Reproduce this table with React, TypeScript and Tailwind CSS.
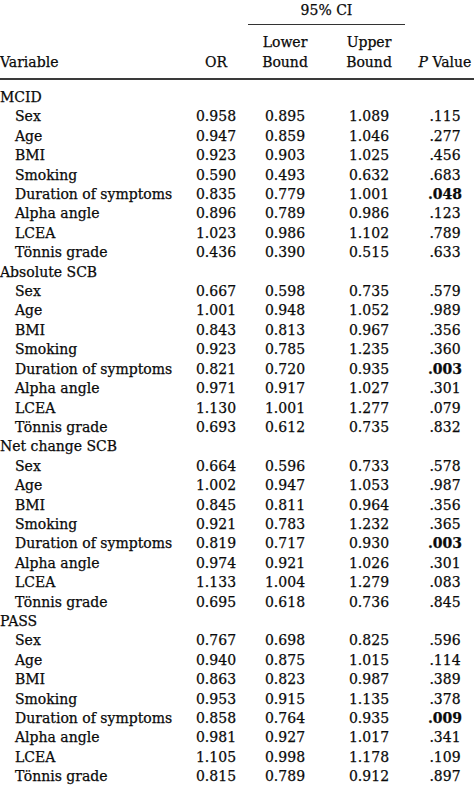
const groups: { name: string; rows: [string, string, string, string, string, boolean?][] }[] = [
  {
    name: "MCID",
    rows: [
      ["Sex", "0.958", "0.895", "1.089", ".115"],
      ["Age", "0.947", "0.859", "1.046", ".277"],
      ["BMI", "0.923", "0.903", "1.025", ".456"],
      ["Smoking", "0.590", "0.493", "0.632", ".683"],
      ["Duration of symptoms", "0.835", "0.779", "1.001", ".048", true],
      ["Alpha angle", "0.896", "0.789", "0.986", ".123"],
      ["LCEA", "1.023", "0.986", "1.102", ".789"],
      ["Tönnis grade", "0.436", "0.390", "0.515", ".633"],
    ],
  },
  {
    name: "Absolute SCB",
    rows: [
      ["Sex", "0.667", "0.598", "0.735", ".579"],
      ["Age", "1.001", "0.948", "1.052", ".989"],
      ["BMI", "0.843", "0.813", "0.967", ".356"],
      ["Smoking", "0.923", "0.785", "1.235", ".360"],
      ["Duration of symptoms", "0.821", "0.720", "0.935", ".003", true],
      ["Alpha angle", "0.971", "0.917", "1.027", ".301"],
      ["LCEA", "1.130", "1.001", "1.277", ".079"],
      ["Tönnis grade", "0.693", "0.612", "0.735", ".832"],
    ],
  },
  {
    name: "Net change SCB",
    rows: [
      ["Sex", "0.664", "0.596", "0.733", ".578"],
      ["Age", "1.002", "0.947", "1.053", ".987"],
      ["BMI", "0.845", "0.811", "0.964", ".356"],
      ["Smoking", "0.921", "0.783", "1.232", ".365"],
      ["Duration of symptoms", "0.819", "0.717", "0.930", ".003", true],
      ["Alpha angle", "0.974", "0.921", "1.026", ".301"],
      ["LCEA", "1.133", "1.004", "1.279", ".083"],
      ["Tönnis grade", "0.695", "0.618", "0.736", ".845"],
    ],
  },
  {
    name: "PASS",
    rows: [
      ["Sex", "0.767", "0.698", "0.825", ".596"],
      ["Age", "0.940", "0.875", "1.015", ".114"],
      ["BMI", "0.863", "0.823", "0.987", ".389"],
      ["Smoking", "0.953", "0.915", "1.135", ".378"],
      ["Duration of symptoms", "0.858", "0.764", "0.935", ".009", true],
      ["Alpha angle", "0.981", "0.927", "1.017", ".341"],
      ["LCEA", "1.105", "0.998", "1.178", ".109"],
      ["Tönnis grade", "0.815", "0.789", "0.912", ".897"],
    ],
  },
];

const cols = "grid grid-cols-[184px_64px_74px_94px_58px]";

export default function App() {
  return (
    <div
      className="w-[474px] h-[786px] overflow-hidden bg-white text-[#0a0a0a] text-[14px] leading-[19.4px] [-webkit-text-stroke:0.25px_#0a0a0a]"
      style={{ fontFamily: '"DejaVu Serif", serif' }}
    >
      {/* header */}
      <div className={cols}>
        <div className="col-start-3 col-span-2 mr-[11px] h-[25px] border-b-[1.5px] border-[#333] text-center leading-[20px]">
          95% CI
        </div>
      </div>
      <div className={`${cols} items-end h-[55px] pb-[6px] border-b-2 border-[#3a3a3a]`}>
        <div>Variable</div>
        <div className="text-center">OR</div>
        <div className="text-center">
          Lower
          <br />
          Bound
        </div>
        <div className="text-center">
          Upper
          <br />
          Bound
        </div>
        <div className="text-center whitespace-nowrap">
          <i>P</i> Value
        </div>
      </div>

      {/* body */}
      <div className="pt-[8px]">
        {groups.map((g) => (
          <div key={g.name}>
            <div>{g.name}</div>
            {g.rows.map((r, i) => (
              <div key={i} className={cols}>
                <div className="pl-[15px] whitespace-nowrap">{r[0]}</div>
                <div className="text-center">{r[1]}</div>
                <div className="text-center">{r[2]}</div>
                <div className="text-center">{r[3]}</div>
                <div className={`text-center ${r[5] ? "font-bold" : ""}`}>{r[4]}</div>
              </div>
            ))}
          </div>
        ))}
      </div>
    </div>
  );
}
